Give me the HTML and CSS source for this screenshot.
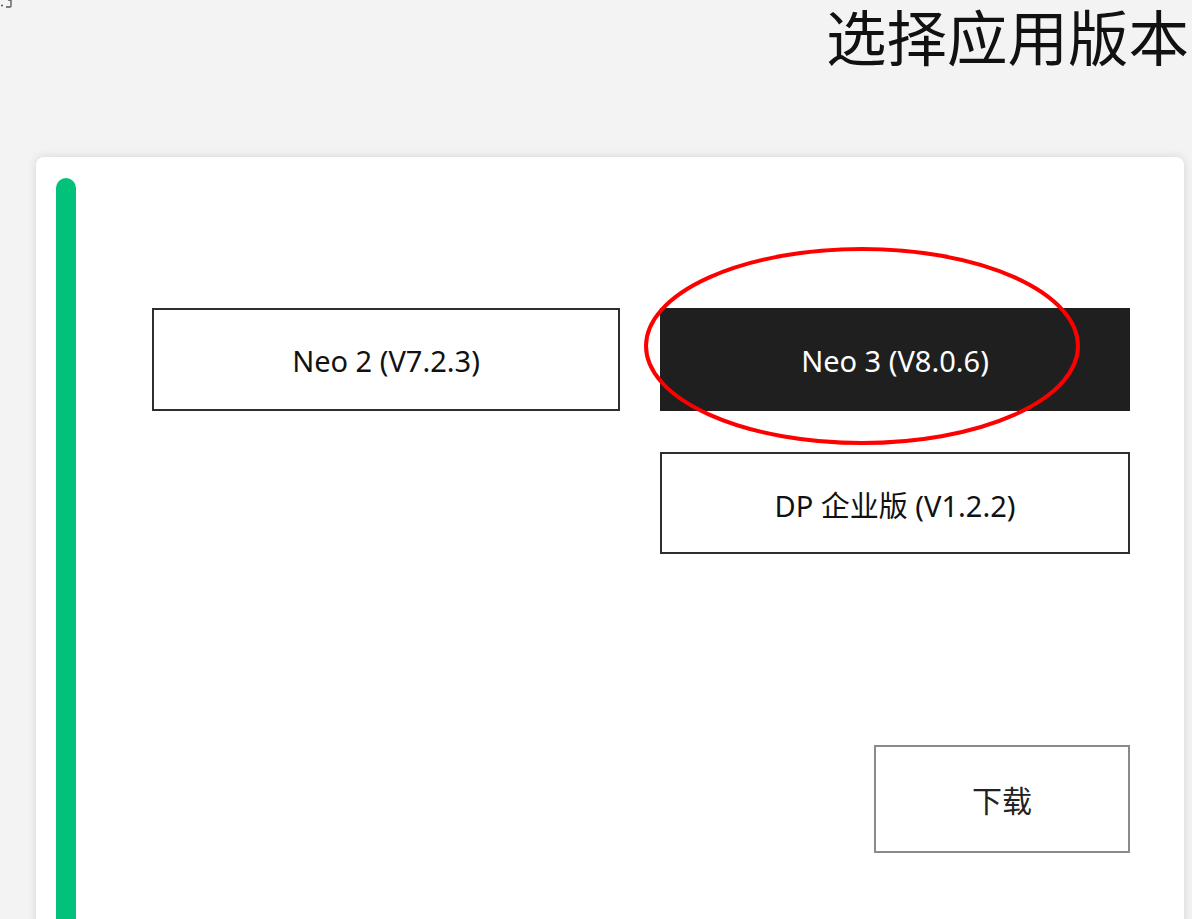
FILE: index.html
```html
<!DOCTYPE html>
<html lang="zh-CN">
<head>
<meta charset="utf-8">
<title>选择应用版本</title>
<link rel="stylesheet" href="styles.css">
</head>
<body>
<svg class="broken" width="14" height="10" viewBox="0 0 14 10"><path d="M1 5.5 L3 5.5 M8 0 L11 0 L11 6 Q11 7 10 7 L6 7" fill="none" stroke="#555" stroke-width="1.3"/></svg>
<header class="header">
  <h1 class="title">选择应用版本</h1>
</header>
<main class="card">
  <div class="bar"></div>
  <div class="content">
    <div class="grid">
      <button class="opt">Neo 2 (V7.2.3)</button>
      <button class="opt selected">Neo 3 (V8.0.6)</button>
      <div class="spacer"></div>
      <button class="opt">DP 企业版 (V1.2.2)</button>
    </div>
    <div class="actions">
      <button class="download">下载</button>
    </div>
  </div>
  <svg class="mark" width="450" height="210" viewBox="0 0 450 210"><ellipse cx="225" cy="104" rx="216" ry="97" fill="none" stroke="#f00" stroke-width="4"/></svg>
</main>
</body>
</html>
```
FILE: styles.css
```css
html, body {
  margin: 0;
  padding: 0;
}
body {
  background: #f3f3f3;
  font-family: "Noto Sans", "Noto Sans CJK SC", sans-serif;
  width: 1192px;
  height: 919px;
  overflow: hidden;
  position: relative;
}
.broken {
  position: absolute;
  left: 0;
  top: 0;
}
.header {
  height: 157px;
  display: flex;
  justify-content: flex-end;
  box-sizing: border-box;
  padding-right: 3px;
  padding-top: 2px;
}
.title {
  margin: 0;
  font-family: "Noto Sans CJK SC", sans-serif;
  font-weight: 400;
  font-size: 60.5px;
  line-height: 66px;
  height: 66px;
  color: #111;
}
.card {
  position: relative;
  margin-left: 36px;
  width: 1148px;
  height: 780px;
  background: #fff;
  border-radius: 8px 8px 0 0;
  box-shadow: 0 0 10px rgba(0, 0, 0, 0.13);
  display: flex;
  box-sizing: border-box;
  padding: 21px 54px 0 20px;
}
.bar {
  width: 20px;
  flex: none;
  background: #02c27b;
  border-radius: 10px 10px 0 0;
}
.content {
  flex: 1;
  padding-left: 76px;
  padding-top: 130px;
  display: flex;
  flex-direction: column;
}
.grid {
  display: grid;
  grid-template-columns: 468px 470px;
  grid-template-rows: 103px 102px;
  column-gap: 40px;
  row-gap: 41px;
}
.opt {
  font-family: "Noto Sans", "Noto Sans CJK SC", sans-serif;
  font-size: 29px;
  color: #111;
  background: #fff;
  border: 2px solid #2e2e2e;
  margin: 0;
  padding: 2px 0 0 0;
  box-sizing: border-box;
}
.opt.selected {
  background: #1f1f1f;
  border-color: #1f1f1f;
  color: #fff;
}
.actions {
  margin-top: 191px;
  display: flex;
  justify-content: flex-end;
}
.download {
  width: 256px;
  height: 108px;
  box-sizing: border-box;
  border: 2px solid #8a8a8a;
  background: #fff;
  font-family: "Noto Sans CJK SC", sans-serif;
  font-size: 30px;
  color: #222;
  margin: 0;
  padding: 0;
}
.mark {
  position: absolute;
  left: 601px;
  top: 85px;
}
```
